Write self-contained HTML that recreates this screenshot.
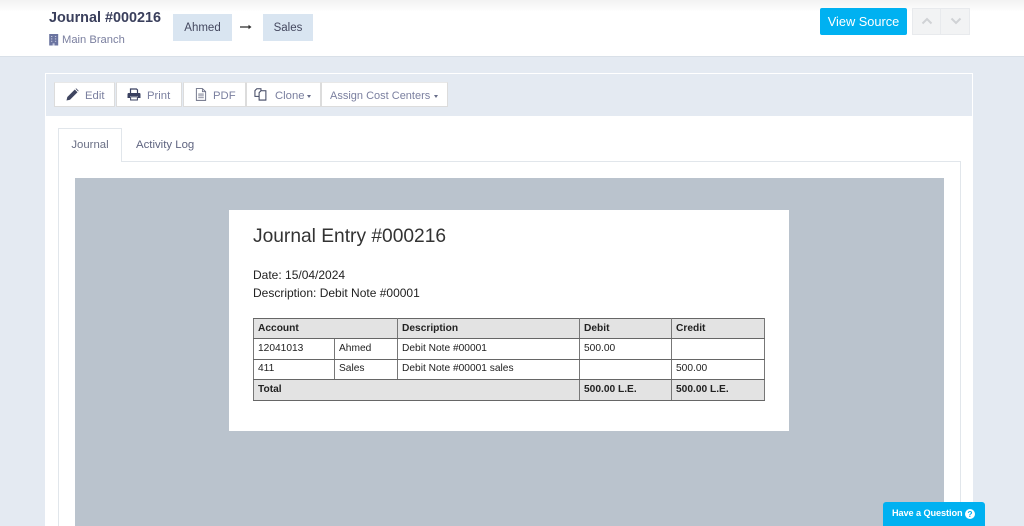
<!DOCTYPE html>
<html><head><meta charset="utf-8">
<style>
html,body{margin:0;padding:0}
body{width:1024px;height:526px;overflow:hidden;position:relative;background:#e4eaf2;font-family:"Liberation Sans",sans-serif;color:#333}
.a{position:absolute;white-space:nowrap;box-sizing:border-box}
.btn{position:absolute;top:82px;height:25px;background:#fff;box-sizing:border-box;border:1px solid #dcdcdc;border-top-color:#e8e8e8}
.bt{position:absolute;top:89px;font-size:11.3px;line-height:14px;color:#7a7f9f;white-space:nowrap}
.caret{position:absolute;width:0;height:0;border-left:2.5px solid transparent;border-right:2.5px solid transparent;border-top:3px solid #666c88}
table{position:absolute;left:253px;top:318px;width:511px;border-collapse:collapse;table-layout:fixed;font-size:10.2px;color:#222}
td{border:1px solid #666;padding:0 0 0 4px;height:19.5px;line-height:14px;white-space:nowrap;border-left-color:#777;border-right-color:#777}
tr.h td{height:19px}
tr.g td{background:#e3e3e3;font-weight:bold}
</style></head><body>
<div class="a" style="left:0;top:0;width:1024px;height:57px;background:linear-gradient(#f2f2f2 0,#fff 12px);border-bottom:1px solid #d9e0e8"></div>
<div class="a" style="left:49px;top:10px;font-size:14.4px;line-height:17px;font-weight:bold;color:#3a3f5c">Journal #000216</div>
<svg class="a" style="left:49px;top:34px" width="10" height="12" viewBox="0 0 10 12"><rect width="9" height="11.5" x=".2" fill="#6b74a0"/><g fill="#c3c8de"><rect x="2" y="2" width="1.3" height="1"/><rect x="5.9" y="2" width="1.3" height="1"/><rect x="2" y="4.400" width="1.3" height="1"/><rect x="5.9" y="4.400" width="1.3" height="1"/><rect x="2" y="6.800" width="1.3" height="1"/><rect x="5.9" y="6.800" width="1.3" height="1"/><rect x="3.600" y="9.300" width="2" height="2.200"/></g></svg>
<div class="a" style="left:62px;top:33px;font-size:11.2px;line-height:14px;color:#7a7f9f">Main Branch</div>
<div class="a" style="left:173px;top:14px;width:59px;height:27px;background:#d9e5f1;font-size:11.5px;line-height:28px;text-align:center;color:#44485f">Ahmed</div>
<svg class="a" style="left:240px;top:24px" width="12" height="6" viewBox="0 0 12 6"><path d="M0 3H10" stroke="#333" stroke-width="1.3"/><path d="M8.5 .8L11.5 3L8.5 5.2Z" fill="#333"/></svg>
<div class="a" style="left:263px;top:14px;width:50px;height:27px;background:#d9e5f1;font-size:11.5px;line-height:28px;text-align:center;color:#44485f">Sales</div>
<div class="a" style="left:820px;top:8px;width:87px;height:27px;background:#00b1f1;border-radius:2px;color:#fff;font-size:12.8px;line-height:27px;text-align:center">View Source</div>
<div class="a" style="left:912px;top:8px;width:29px;height:27px;background:#f2f3f4;border:1px solid #e8eaed"></div>
<div class="a" style="left:940px;top:8px;width:30px;height:27px;background:#f2f3f4;border:1px solid #e8eaed"></div>
<svg class="a" style="left:921px;top:17px" width="12" height="8" viewBox="0 0 12 8"><path d="M1.5 6.5L6 2L10.500 6.500" fill="none" stroke="#d0d2d5" stroke-width="2"/></svg>
<svg class="a" style="left:950px;top:17px" width="12" height="8" viewBox="0 0 12 8"><path d="M1.500 1.500L6 6L10.500 1.500" fill="none" stroke="#d0d2d5" stroke-width="2"/></svg>

<div class="a" style="left:45px;top:73px;width:928px;height:453px;background:#fff"></div>
<div class="a" style="left:46px;top:74px;width:926px;height:42px;background:#e4eaf2"></div>

<div class="btn" style="left:54px;width:61px"></div>
<div class="btn" style="left:116px;width:66px"></div>
<div class="btn" style="left:183px;width:63px"></div>
<div class="btn" style="left:246px;width:75px"></div>
<div class="btn" style="left:321px;width:127px"></div>
<svg class="a" style="left:66px;top:88px" width="13" height="13" viewBox="0 0 13 13"><path d="M0.500 12.500L1.300 9L8.800 1.500L11.500 4.200L4 11.700Z" fill="#3f4560"/><path d="M9.500.8L10.300.4L12.600 2.700L12.200 3.500Z" fill="#3f4560"/></svg>
<div class="bt" style="left:85px">Edit</div>
<svg class="a" style="left:127px;top:88px" width="14" height="13" viewBox="0 0 14 13"><path d="M3.500 5V1H9.500L10.500 2V5" fill="none" stroke="#3a4060" stroke-width="1.200"/><path d="M1.500 5H12.500Q13.500 5 13.500 6.500V10H11V8H3V10H.5V6.500Q.5 5 1.500 5Z" fill="#3a4060"/><rect x="3.600" y="8.800" width="6.800" height="3.200" fill="#fff" stroke="#3a4060" stroke-width="1"/></svg>
<div class="bt" style="left:147px">Print</div>
<svg class="a" style="left:195px;top:88px" width="12" height="13" viewBox="0 0 12 14"><path d="M1 .6H7.500L11 4V13.300H1Z" fill="#fff" stroke="#6a6e84"/><path d="M7.500.6V4H11M3 6.500H9M3 8.500H9M3 10.500H9" fill="none" stroke="#6a6e84" stroke-width=".9"/></svg>
<div class="bt" style="left:213px">PDF</div>
<svg class="a" style="left:254px;top:88px" width="13" height="13" viewBox="0 0 14 14"><path d="M1 2.800L3 .8H7.500V9H1Z" fill="#fff" stroke="#3f4560" stroke-width="1.100"/><path d="M5.500 5L7.500 3H12.800V13H5.500Z" fill="#fff" stroke="#3f4560" stroke-width="1.100"/></svg>
<div class="bt" style="left:275px">Clone</div>
<div class="caret" style="left:307px;top:95px"></div>
<div class="bt" style="left:330px;font-size:11px">Assign Cost Centers</div>
<div class="caret" style="left:434px;top:95px"></div>

<div class="a" style="left:58px;top:161px;width:903px;height:365px;border:1px solid #e1e6eb;border-bottom:none"></div>
<div class="a" style="left:58px;top:128px;width:64px;height:34px;background:#fff;border:1px solid #e1e6eb;border-bottom:none;font-size:11.4px;line-height:32px;text-align:center;color:#6a6f85">Journal</div>
<div class="a" style="left:136px;top:138px;font-size:11.4px;line-height:14px;color:#5f6480">Activity Log</div>

<div class="a" style="left:75px;top:178px;width:869px;height:348px;background:#bac3cd"></div>
<div class="a" style="left:229px;top:210px;width:560px;height:221px;background:#fff"></div>
<div class="a" style="left:253px;top:225px;font-size:19.200px;line-height:23px;color:#333">Journal Entry #000216</div>
<div class="a" style="left:253px;top:266px;font-size:12px;line-height:18px;color:#222">Date: 15/04/2024<br>Description: Debit Note #00001</div>

<table>
<colgroup><col style="width:81px"><col style="width:63px"><col style="width:182px"><col style="width:92px"><col style="width:93px"></colgroup>
<tr class="g h"><td colspan="2">Account</td><td>Description</td><td>Debit</td><td>Credit</td></tr>
<tr><td>12041013</td><td>Ahmed</td><td>Debit Note #00001</td><td>500.00</td><td></td></tr>
<tr><td>411</td><td>Sales</td><td>Debit Note #00001 sales</td><td></td><td>500.00</td></tr>
<tr class="g"><td colspan="3">Total</td><td>500.00 L.E.</td><td>500.00 L.E.</td></tr>
</table>

<div class="a" style="left:883px;top:502px;width:102px;height:24px;background:#00b1f1;border-radius:3px 3px 0 0"></div>
<div class="a" style="left:892px;top:507px;font-size:9.200px;line-height:13px;font-weight:bold;color:#fff;letter-spacing:-.1px">Have a Question</div>
<div class="a" style="left:965px;top:509px;width:10px;height:10px;border-radius:50%;background:#fff;color:#00b1f1;font-size:8.500px;line-height:10px;font-weight:bold;text-align:center">?</div>
</body></html>
